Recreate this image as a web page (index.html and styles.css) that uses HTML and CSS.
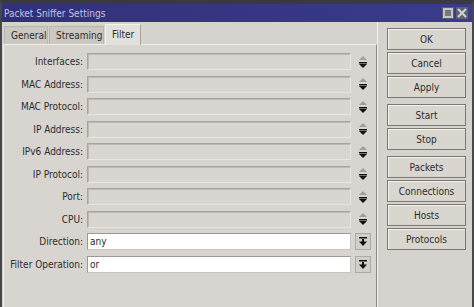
FILE: index.html
```html
<!DOCTYPE html>
<html lang="en">
<head>
    <meta charset="UTF-8">
    <title>Packet Sniffer Settings</title>
    <link rel="stylesheet" href="styles.css">
</head>
<body>

<div class="window">
    <div class="titlebar">
        <span class="title">Packet Sniffer Settings</span>
        <div class="win-buttons">
            <span class="win-btn"><span class="max-icon"></span></span>
            <span class="win-btn">
                <svg width="10" height="10" viewBox="0 0 10 10"><path d="M1 1 L9 9 M9 1 L1 9" stroke="#d2d2d2" stroke-width="2"/></svg>
            </span>
        </div>
    </div>

    <div class="content">
        <div class="main">
            <div class="tabs">
                <div class="tab">General</div>
                <div class="tab">Streaming</div>
                <div class="tab active">Filter</div>
            </div>

            <div class="panel">
                <div class="form">
                    <label>Interfaces:</label>
                    <div class="field disabled"></div>
                    <div class="spin"></div>

                    <label>MAC Address:</label>
                    <div class="field disabled"></div>
                    <div class="spin"></div>

                    <label>MAC Protocol:</label>
                    <div class="field disabled"></div>
                    <div class="spin"></div>

                    <label>IP Address:</label>
                    <div class="field disabled"></div>
                    <div class="spin"></div>

                    <label>IPv6 Address:</label>
                    <div class="field disabled"></div>
                    <div class="spin"></div>

                    <label>IP Protocol:</label>
                    <div class="field disabled"></div>
                    <div class="spin"></div>

                    <label>Port:</label>
                    <div class="field disabled"></div>
                    <div class="spin"></div>

                    <label>CPU:</label>
                    <div class="field disabled"></div>
                    <div class="spin"></div>

                    <label>Direction:</label>
                    <div class="field">any</div>
                    <div class="drop"></div>

                    <label>Filter Operation:</label>
                    <div class="field">or</div>
                    <div class="drop"></div>
                </div>
            </div>
        </div>

        <div class="side">
            <div class="group">
                <button>OK</button>
                <button>Cancel</button>
                <button>Apply</button>
            </div>
            <div class="group">
                <button>Start</button>
                <button>Stop</button>
            </div>
            <div class="group">
                <button>Packets</button>
                <button>Connections</button>
                <button>Hosts</button>
                <button>Protocols</button>
            </div>
        </div>
    </div>
</div>

<script>
    // spinner and dropdown arrows are the same everywhere, fill them in once
    const spinSvg = '<svg width="10" height="14" viewBox="0 0 10 14">' +
        '<polygon points="1,5 5,1 9,5" fill="#a2a09c"/>' +
        '<rect x="1" y="7" width="8" height="1.5" fill="#111"/>' +
        '<polygon points="1,9 9,9 5,13" fill="#111"/></svg>';
    const dropSvg = '<svg width="8" height="9" viewBox="0 0 8 9">' +
        '<rect x="0" y="0" width="8" height="1.5" fill="#111"/>' +
        '<rect x="3" y="2" width="2" height="3" fill="#111"/>' +
        '<polygon points="0,4.5 8,4.5 4,9" fill="#111"/></svg>';

    document.querySelectorAll('.spin').forEach(el => el.innerHTML = spinSvg);
    document.querySelectorAll('.drop').forEach(el => el.innerHTML = dropSvg);
</script>

</body>
</html>
```

FILE: styles.css
```css
* {
    margin: 0;
    padding: 0;
    box-sizing: border-box;
}

body {
    font-family: 'DejaVu Sans Condensed', 'DejaVu Sans', sans-serif;
    font-size: 10px;
    color: #2c2c2c;
    background-color: #3b3b3b;
}

.window {
    width: 474px;
    height: 307px;
    overflow: hidden;
    background-color: #d6d3ce;
    border-top: 4px solid #3a3a3e;
    border-left: 2px solid #46464c;
    border-right: 2px solid #46464c;
}

.titlebar {
    height: 18px;
    display: flex;
    align-items: center;
    justify-content: space-between;
    padding: 0 4px 0 2px;
    background: linear-gradient(to right, #303079, #3b3b8e);
}

.title {
    color: #c4c4da;
    font-size: 10px;
}

.win-buttons {
    display: flex;
    gap: 2px;
}

.win-btn {
    width: 12px;
    height: 12px;
    display: flex;
    align-items: center;
    justify-content: center;
    background-color: #5f5f72;
}

.max-icon {
    width: 10px;
    height: 10px;
    border: 2px solid #c4c4c4;
    background-color: #77777f;
}

.content {
    display: flex;
    height: 285px;
}

.main {
    width: 375px;
    display: flex;
    flex-direction: column;
}

.tabs {
    display: flex;
    align-items: flex-end;
    height: 22px;
    padding-left: 2px;
}

.tab {
    height: 18px;
    line-height: 17px;
    padding: 0 6px;
    margin-right: 1px;
    background-color: #cbc8c2;
    border: 1px solid #b8b5af;
    border-bottom: none;
}

.tab:nth-child(1) { width: 44px; }
.tab:nth-child(2) { width: 55px; }

.tab.active {
    height: 21px;
    width: 36px;
    line-height: 20px;
    background-color: #e3e1dd;
    border-color: #f2f2f0 #a9a6a0 transparent #f2f2f0;
    margin-bottom: -1px;
    position: relative;
    z-index: 1;
}

.panel {
    flex: 1;
    margin-left: 1px;
    border-top: 1px solid #f0efec;
    border-left: 1px solid #f0efec;
    border-right: 1px solid #8e8b86;
    padding-top: 8px;
    background-color: #d8d5d0;
}

.form {
    display: grid;
    grid-template-columns: 79px 264px 16px;
    grid-auto-rows: 17px;
    column-gap: 4px;
    row-gap: 5.5px;
    align-items: center;
}

label {
    text-align: right;
    white-space: nowrap;
}

.field {
    height: 17px;
    line-height: 15px;
    padding-left: 2px;
    background-color: #ffffff;
    border: 1px solid #9c9994;
    border-bottom-color: #c9c6c1;
    border-right-color: #c9c6c1;
}

.field.disabled {
    background-color: #d9d6d1;
    border-color: #a8a59f #e8e6e2 #e8e6e2 #a8a59f;
    box-shadow: inset 1px 1px 0 #bdbab4;
}

.spin {
    display: flex;
    justify-content: center;
    align-items: center;
}

.drop {
    height: 17px;
    display: flex;
    justify-content: center;
    align-items: center;
    background-color: #d2cfc9;
    border: 1px solid #aeaba5;
}

.side {
    flex: 1;
    border-left: 1px solid #f0efec;
    padding: 6px 0 0 9px;
}

.group {
    display: flex;
    flex-direction: column;
    gap: 2px;
    margin-bottom: 6px;
}

button {
    width: 79px;
    height: 22px;
    font-family: inherit;
    font-size: 10px;
    color: #2c2c2c;
    background-color: #d9d6d0;
    border: 1px solid #7b7873;
    box-shadow: inset 1px 1px 0 #f3f2ef;
}
```
